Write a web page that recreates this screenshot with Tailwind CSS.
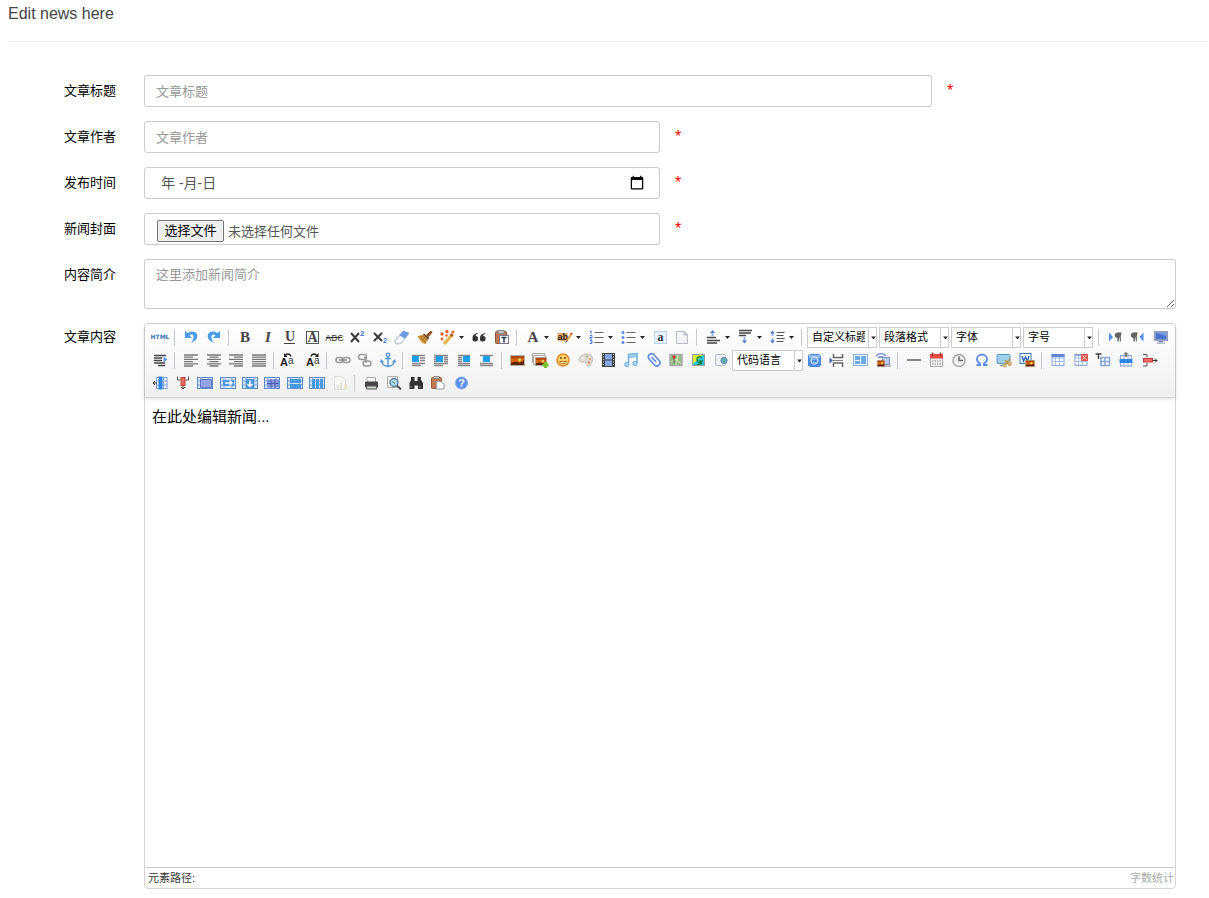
<!DOCTYPE html>
<html lang="zh-CN">
<head>
    <meta charset="UTF-8">
    <meta name="viewport" content="width=device-width, initial-scale=1.0">
    <title>Edit news</title>
    <script src="https://cdn.jsdelivr.net/npm/@tailwindcss/browser@4"></script>
</head>
<body class="bg-white font-['Liberation_Sans','Noto_Sans_CJK_SC',sans-serif] text-[13px] text-black">

    <!-- shared icon parts -->
    <svg class="hidden">
        <symbol id="caret" viewBox="0 0 5 20"><path d="M0 9h5L2.500 12z" fill="#222"/></symbol>
        <symbol id="grid" viewBox="0 0 20 20">
            <rect x="4" y="4.500" width="12" height="11" fill="#f4f8ff" stroke="#8ba6d8"/>
            <path d="M4 8h12M4 11.500h12M7.500 5v10M11.500 5v10" stroke="#a9bee6"/>
        </symbol>
        <symbol id="film" viewBox="0 0 20 20">
            <rect x="2.500" y="4.500" width="15" height="11" fill="#d5e6f8" stroke="#5f8cc8"/>
            <path d="M3 8h14M3 12h14M6 4v12M14 4v12" stroke="#7fa4d6"/>
        </symbol>
        <symbol id="photo" viewBox="0 0 14 10" preserveAspectRatio="none">
            <rect x=".5" y=".5" width="13" height="9" fill="#d8640f" stroke="#b5b0aa"/>
            <path d="M1 1h12v2H1z" fill="#a8480c"/><path d="M1 7l5-1 3 1 4-2v4H1z" fill="#5a2408"/><circle cx="9" cy="4.500" r="1.500" fill="#ffd05a"/>
        </symbol>
    </svg>

    <div class="pl-2 pr-px">
        <h1 class="border-b border-[#eee] pb-[13px] text-base leading-7 text-[#444]">Edit news here</h1>
    </div>

    <form class="flex flex-col gap-[14px] pt-[33px] pr-[33px] pb-[9px] pl-2">
        <div class="flex gap-7">
            <label for="title" class="w-[108px] shrink-0 text-right leading-8">文章标题</label>
            <div class="grid flex-1 grid-cols-[788fr_244fr]">
                <input type="text" id="title" placeholder="文章标题" class="h-8 w-full rounded-[3px] border border-[#ccc] px-[11px] text-[#555] placeholder:text-[#999] focus:border-sky-400 focus:outline-none">
                <span class="pl-[15px] text-base leading-8 text-[#f00]">*</span>
            </div>
        </div>

        <div class="flex gap-7">
            <label for="author" class="w-[108px] shrink-0 text-right leading-8">文章作者</label>
            <div class="grid flex-1 grid-cols-2">
                <input type="text" id="author" placeholder="文章作者" class="h-8 w-full rounded-[3px] border border-[#ccc] px-[11px] text-[#555] placeholder:text-[#999] focus:border-sky-400 focus:outline-none">
                <span class="pl-[15px] text-base leading-8 text-[#f00]">*</span>
            </div>
        </div>

        <div class="flex gap-7">
            <label for="date" class="w-[108px] shrink-0 text-right leading-8">发布时间</label>
            <div class="grid flex-1 grid-cols-2">
                <div class="relative">
                    <input type="date" id="date" class="h-8 w-full rounded-[3px] border border-[#ccc] px-3 text-base text-[#555] focus:border-sky-400 focus:outline-none [&::-webkit-datetime-edit]:opacity-0">
                    <span id="date-hint" class="pointer-events-none absolute inset-y-0 left-[17px] text-sm leading-8 text-[#555]">年 -月-日</span>
                </div>
                <span class="pl-[15px] text-base leading-8 text-[#f00]">*</span>
            </div>
        </div>

        <div class="flex gap-7">
            <label for="cover" class="w-[108px] shrink-0 text-right leading-8">新闻封面</label>
            <div class="grid flex-1 grid-cols-2">
                <div class="relative flex h-8 items-start gap-1 rounded-[3px] border border-[#ccc] px-3 pt-[6px] text-[#555]">
                    <span class="h-[22px] w-[67px] rounded-[2px] border border-[#767676] bg-[#efefef] text-center leading-5 text-black">选择文件</span>
                    <span id="cover-name" class="leading-6">未选择任何文件</span>
                    <input type="file" id="cover" class="absolute inset-0 size-full opacity-0">
                </div>
                <span class="pl-[15px] text-base leading-8 text-[#f00]">*</span>
            </div>
        </div>

        <div class="flex gap-7">
            <label for="intro" class="w-[108px] shrink-0 text-right leading-8">内容简介</label>
            <textarea id="intro" placeholder="这里添加新闻简介" class="block h-[50px] flex-1 rounded-[3px] border border-[#ccc] px-[11px] py-[5px] leading-5 text-[#555] placeholder:text-[#999] focus:border-sky-400 focus:outline-none"></textarea>
        </div>

        <div class="flex gap-7">
            <label for="editor" class="w-[108px] shrink-0 text-right leading-7">文章内容</label>
            <div class="flex-1 rounded-[4px] border border-[#d4d4d4]">

                <!-- toolbar -->
                <div class="flex flex-col gap-[2px] rounded-t-[4px] border-b border-[#d4d4d4] bg-linear-to-b from-white to-[#f0f0f0] py-[3px] pl-1 shadow-[0_1px_4px_rgba(0,0,0,0.15)] [&_button]:flex [&_button]:h-[21px] [&_button]:flex-1 [&_button]:items-start [&_button]:justify-center [&_hr]:mr-[5px] [&_hr]:ml-[3px] [&_hr]:h-[17px] [&_hr]:w-px [&_hr]:border-0 [&_hr]:bg-[#c8c9ce]">

                    <div class="flex min-h-[21px] flex-wrap items-center">
                        <div class="flex w-[22px]">
                            <button type="button" title="源代码"><svg class="size-5 shrink-0 overflow-visible" viewBox="0 0 20 20"><text x="10" y="12" text-anchor="middle" font-size="6" font-weight="bold" font-family="DejaVu Sans" fill="#3c78b4">HTML</text></svg></button>
                        </div>
                        <hr>
                        <div class="flex w-[45px]">
                            <button type="button" title="撤销"><svg class="size-5 shrink-0" viewBox="0 0 20 20"><path d="M4 4v7h7L8.500 8.500C11 6.500 13 8 12.500 11c-.3 1.600-1 3-2.500 4.500C14 14.500 16.500 12 16.300 8.500 15.900 4.500 10.500 3 6.500 6z" fill="#4a9be8"/></svg></button>
                            <button type="button" title="重做"><svg class="size-5 shrink-0" viewBox="0 0 20 20"><path d="M16 4v7H9l2.500-2.500C9 6.500 7 8 7.500 11c.3 1.600 1 3 2.500 4.500C6 14.500 3.500 12 3.700 8.500 4.100 4.500 9.500 3 13.500 6z" fill="#4a9be8"/></svg></button>
                        </div>
                        <hr>
                        <div class="flex w-[202px]">
                            <button type="button" title="加粗"><svg class="size-5 shrink-0" viewBox="0 0 20 20"><text x="10" y="15" text-anchor="middle" font-size="15" font-weight="bold" font-family="Liberation Serif" fill="#444">B</text></svg></button>
                            <button type="button" title="斜体"><svg class="size-5 shrink-0" viewBox="0 0 20 20"><text x="10" y="15" text-anchor="middle" font-size="15" font-weight="bold" font-style="italic" font-family="Liberation Serif" fill="#444">I</text></svg></button>
                            <button type="button" title="下划线"><svg class="size-5 shrink-0" viewBox="0 0 20 20"><text x="10" y="14" text-anchor="middle" font-size="14" font-weight="bold" font-family="Liberation Serif" fill="#444">U</text><path d="M4 16.500h11" stroke="#444"/></svg></button>
                            <button type="button" title="字符边框"><svg class="size-5 shrink-0" viewBox="0 0 20 20"><rect x="3.500" y="4.500" width="12" height="12" fill="none" stroke="#555"/><text x="9.500" y="15" text-anchor="middle" font-size="14" font-weight="bold" font-family="Liberation Serif" fill="#444">A</text></svg></button>
                            <button type="button" title="删除线"><svg class="size-5 shrink-0 overflow-visible" viewBox="0 0 20 20"><text x="9.500" y="14" text-anchor="middle" font-size="9" font-family="Liberation Sans" fill="#333">ABC</text><path d="M1 10.500h16" stroke="#333"/></svg></button>
                            <button type="button" title="上标"><svg class="size-5 shrink-0" viewBox="0 0 20 20"><path d="M4 6l8 9M12 6l-8 9" stroke="#3a3a3a" stroke-width="2"/><text x="13" y="9" font-size="8" font-weight="bold" font-family="Liberation Sans" fill="#3f6fd8">2</text></svg></button>
                            <button type="button" title="下标"><svg class="size-5 shrink-0" viewBox="0 0 20 20"><path d="M4 6l8 8M12 6l-8 8" stroke="#3a3a3a" stroke-width="2"/><text x="13" y="16" font-size="7" font-weight="bold" font-family="Liberation Sans" fill="#3f6fd8">2</text></svg></button>
                            <button type="button" title="清除格式"><svg class="size-5 shrink-0" viewBox="0 0 20 20"><path d="M3 14L11 4l6 2-8 10.500-5 .5z" fill="#f5f8fd" stroke="#a3b6d6"/><path d="M7.500 8.500L11 4l6 2-4 5.500z" fill="#6d9ce6"/></svg></button>
                            <button type="button" title="格式刷"><svg class="size-5 shrink-0" viewBox="0 0 20 20"><path d="M11 8l5-4.500 1.500 2-4.500 5z" fill="#8b5320"/><path d="M2.500 9l7-1.500 4 4-3 5.500c-3-.5-6-3.500-8-8z" fill="#cf933f"/><path d="M9 6.500l5.500 4.500-1.500 1.500-5-5z" fill="#6d4a2c"/><path d="M5.500 9.500l5 6M8 9l4 4.500" stroke="#9d6a2a"/></svg></button>
                        </div>
                        <div class="flex w-8">
                            <button type="button" title="自动排版" class="pl-px"><svg class="size-5 shrink-0" viewBox="0 0 20 20"><path d="M7 17l8-9" stroke="#eeb14a" stroke-width="3"/><path d="M14 9l1.500-2" stroke="#a35a1a" stroke-width="3"/><g fill="#f0602a"><circle cx="5" cy="7" r="1.700"/><circle cx="10" cy="4.500" r="1.700"/><circle cx="5" cy="12" r="1.400"/><circle cx="16" cy="5" r="1.400"/><circle cx="9.500" cy="8.500" r="1.200"/></g></svg><svg class="mr-auto ml-[2px] h-5 w-[5px] shrink-0"><use href="#caret"/></svg></button>
                        </div>
                        <div class="flex w-[45px]">
                            <button type="button" title="引用"><svg class="size-5 shrink-0" viewBox="0 0 20 20"><path d="M9 6C5 6.500 3.500 8.500 3.500 11.500a2.800 2.800 0 1 0 3-2.500C6.700 8 7.500 7 9 6.500zM16.500 6c-4 .5-5.500 2.500-5.500 5.500A2.800 2.800 0 1 0 14 9c.2-1 1-2 2.500-2.500z" fill="#333"/></svg></button>
                            <button type="button" title="纯文本粘贴模式"><svg class="size-5 shrink-0" viewBox="0 0 20 20"><rect x="3.500" y="4.500" width="11" height="12" rx="1" fill="#bd7c55" stroke="#8f5431"/><rect x="6" y="3.500" width="6" height="3" fill="#c4c8ce" stroke="#888"/><rect x="7.500" y="8.500" width="9" height="8" fill="#fff" stroke="#778"/><path d="M9.500 10.500h5M12 10.500v5" stroke="#234" stroke-width="1.500"/></svg></button>
                        </div>
                        <hr>
                        <div class="flex w-32">
                            <button type="button" title="字体颜色" class="pl-px"><svg class="size-5 shrink-0" viewBox="0 0 20 20"><text x="10" y="14.500" text-anchor="middle" font-size="15" font-weight="bold" font-family="Liberation Serif" fill="#444">A</text></svg><svg class="mr-auto ml-px h-5 w-[5px] shrink-0"><use href="#caret"/></svg></button>
                            <button type="button" title="背景色" class="pl-px"><svg class="size-5 shrink-0" viewBox="0 0 20 20"><rect x="2.500" y="6" width="10" height="8" fill="#e8a868"/><text x="2.500" y="13" font-size="9" font-weight="bold" font-family="Liberation Sans" fill="#222">ab</text><path d="M11.500 14L16.500 7" stroke="#e0a04a" stroke-width="2"/><path d="M16 7.500l1-1.500" stroke="#d8442e" stroke-width="2"/><path d="M10.500 15.500l1.500-2" stroke="#333"/></svg><svg class="mr-auto ml-px h-5 w-[5px] shrink-0"><use href="#caret"/></svg></button>
                            <button type="button" title="有序列表" class="pl-px"><svg class="size-5 shrink-0" viewBox="0 0 20 20"><path d="M4 3.500v3.500M3 4.500h1M3 8.500h2v2H3v1.500h2M3 13.500h2v3H3M3.500 15H5" fill="none" stroke="#4f7fe0"/><path d="M7.500 5.500h9M7.500 10.500h9M7.500 15.500h9" stroke="#666"/></svg><svg class="mr-auto ml-px h-5 w-[5px] shrink-0"><use href="#caret"/></svg></button>
                            <button type="button" title="无序列表" class="pl-px"><svg class="size-5 shrink-0" viewBox="0 0 20 20"><g fill="#5c86e6"><circle cx="4" cy="5.500" r="1.500"/><circle cx="4" cy="10.500" r="1.500"/><circle cx="4" cy="15.500" r="1.500"/></g><path d="M7.500 5.500h9M7.500 10.500h9M7.500 15.500h9" stroke="#666"/></svg><svg class="mr-auto ml-px h-5 w-[5px] shrink-0"><use href="#caret"/></svg></button>
                        </div>
                        <div class="flex w-[43px]">
                            <button type="button" title="全选"><svg class="size-5 shrink-0" viewBox="0 0 20 20"><rect x="3.500" y="4.500" width="12" height="12" fill="#e8f1fd" stroke="#7fb0ee" stroke-dasharray="1 1"/><text x="9.500" y="13.500" text-anchor="middle" font-size="12" font-weight="bold" font-family="Liberation Serif" fill="#333">a</text></svg></button>
                            <button type="button" title="清空文档"><svg class="size-5 shrink-0" viewBox="0 0 20 20"><path d="M4.500 4.500h8l3 3v9h-11z" fill="#f3f5f9" stroke="#b4b9c4"/><path d="M12 4.500V8h3.500z" fill="#d5dae4" stroke="#b4b9c4"/></svg></button>
                        </div>
                        <hr>
                        <div class="flex w-24">
                            <button type="button" title="段前距" class="pl-[2px]"><svg class="size-5 shrink-0" viewBox="0 0 20 20"><path d="M3 10.500h9M3 13.500h13M3 16h10" stroke="#444" stroke-width="1.500"/><path d="M8.500 9V5" stroke="#9ab2e6" stroke-width="2"/><path d="M6 6l2.500-3L11 6z" fill="#5678c8"/></svg><svg class="mr-auto ml-px h-5 w-[5px] shrink-0"><use href="#caret"/></svg></button>
                            <button type="button" title="段后距" class="pl-[2px]"><svg class="size-5 shrink-0" viewBox="0 0 20 20"><path d="M3 3.500h13M3 6h12M3 8.500h7" stroke="#444" stroke-width="1.500"/><path d="M8.500 10v4" stroke="#9ab2e6" stroke-width="2"/><path d="M6 13.500l2.500 3 2.500-3z" fill="#5678c8"/></svg><svg class="mr-auto ml-px h-5 w-[5px] shrink-0"><use href="#caret"/></svg></button>
                            <button type="button" title="行间距" class="pl-[2px]"><svg class="size-5 shrink-0" viewBox="0 0 20 20"><path d="M8.500 5.500h8M8.500 8.500h7M8.500 11.500h8M8.500 14.500h7" stroke="#555"/><path d="M4.500 5v10" stroke="#9ab2e6" stroke-width="2" stroke-dasharray="4 2"/><path d="M2 6.500l2.500-3 2.500 3zM2 13.500l2.500 3 2.500-3z" fill="#5678c8"/></svg><svg class="mr-auto ml-px h-5 w-[5px] shrink-0"><use href="#caret"/></svg></button>
                        </div>
                        <hr>
                        <div class="flex gap-[2px] pr-[2px]">
                            <div class="flex h-[21px] w-[70px] border border-[#ccc] bg-white">
                                <div class="w-[61px] border-r border-[#ccc] pr-[3px]"><select aria-label="自定义标题" class="block w-full appearance-none pl-1 text-[11px] leading-[19px] outline-none"><option>自定义标题</option></select></div>
                                <svg class="ml-[2px] h-[19px] w-[5px]"><use href="#caret"/></svg>
                            </div>
                            <div class="flex h-[21px] w-[70px] border border-[#ccc] bg-white">
                                <div class="w-[61px] border-r border-[#ccc] pr-[3px]"><select aria-label="段落格式" class="block w-full appearance-none pl-1 text-[11px] leading-[19px] outline-none"><option>段落格式</option></select></div>
                                <svg class="ml-[2px] h-[19px] w-[5px]"><use href="#caret"/></svg>
                            </div>
                            <div class="flex h-[21px] w-[70px] border border-[#ccc] bg-white">
                                <div class="w-[61px] border-r border-[#ccc] pr-[3px]"><select aria-label="字体" class="block w-full appearance-none pl-1 text-[11px] leading-[19px] outline-none"><option>字体</option></select></div>
                                <svg class="ml-[2px] h-[19px] w-[5px]"><use href="#caret"/></svg>
                            </div>
                            <div class="flex h-[21px] w-[70px] border border-[#ccc] bg-white">
                                <div class="w-[61px] border-r border-[#ccc] pr-[3px]"><select aria-label="字号" class="block w-full appearance-none pl-1 text-[11px] leading-[19px] outline-none"><option>字号</option></select></div>
                                <svg class="ml-[2px] h-[19px] w-[5px]"><use href="#caret"/></svg>
                            </div>
                        </div>
                        <hr>
                        <div class="flex w-[67px]">
                            <button type="button" title="从左向右输入"><svg class="size-5 shrink-0" viewBox="0 0 20 20"><path d="M4 5.500l4 4.500-4 4.500z" fill="#4f8df0"/><path d="M16.500 6H12.500a2.200 2.200 0 0 0 0 4.400h.5V14.500M15.300 6V14.500" fill="#666" stroke="#555"/></svg></button>
                            <button type="button" title="从右向左输入"><svg class="size-5 shrink-0" viewBox="0 0 20 20"><path d="M16.500 5.500l-4 4.500 4 4.500z" fill="#4f8df0"/><path d="M10.500 6H6.500a2.200 2.200 0 0 0 0 4.400h.5V14.500M9.300 6V14.500" fill="#666" stroke="#555"/></svg></button>
                            <button type="button" title="全屏"><svg class="size-5 shrink-0" viewBox="0 0 20 20"><rect x="5" y="5" width="12" height="8" fill="#4a70d0" stroke="#8d9dc4" stroke-width="2"/><path d="M6 6h10v3z" fill="#7598e8"/><path d="M9 14.500h4M7 16h8" stroke="#7788aa"/></svg></button>
                        </div>
                    </div>

                    <div class="flex min-h-[21px] flex-wrap items-center">
                        <div class="flex w-[22px]">
                            <button type="button" title="首行缩进"><svg class="size-5 shrink-0" viewBox="0 0 20 20"><path d="M4 5.500h12M4 8h8M4 10.500h8M4 13h11M8 15.500h7" stroke="#444" stroke-width="1.500"/><path d="M13.500 6.500l4 3-4 3z" fill="#5b95f2"/></svg></button>
                        </div>
                        <hr>
                        <div class="flex w-[90px]">
                            <button type="button" title="居左对齐"><svg class="size-5 shrink-0" viewBox="0 0 20 20"><path d="M3 5h14M3 7.200h9M3 9.400h14M3 11.600h9M3 13.800h14M3 16h9" stroke="#777" stroke-width="1.300"/></svg></button>
                            <button type="button" title="居中对齐"><svg class="size-5 shrink-0" viewBox="0 0 20 20"><path d="M3 5h14M5.500 7.200h9M3 9.400h14M5.500 11.600h9M3 13.800h14M5.500 16h9" stroke="#777" stroke-width="1.300"/></svg></button>
                            <button type="button" title="居右对齐"><svg class="size-5 shrink-0" viewBox="0 0 20 20"><path d="M3 5h14M8 7.200h9M3 9.400h14M8 11.600h9M3 13.800h14M8 16h9" stroke="#777" stroke-width="1.300"/></svg></button>
                            <button type="button" title="两端对齐"><svg class="size-5 shrink-0" viewBox="0 0 20 20"><path d="M3 5h14M3 7.200h14M3 9.400h14M3 11.600h14M3 13.800h14M3 16h14" stroke="#777" stroke-width="1.300"/></svg></button>
                        </div>
                        <hr>
                        <div class="flex w-11">
                            <button type="button" title="字母大写"><svg class="size-5 shrink-0 overflow-visible" viewBox="0 0 20 20"><text x="0" y="16" font-size="11" font-weight="bold" font-family="Liberation Sans" fill="#222">A</text><text x="8" y="14" font-size="10" font-family="Liberation Sans" fill="#333">a</text><path d="M5 6c1-2.500 5-3 6 .5" fill="none" stroke="#222" stroke-width="1.300"/><path d="M4 3v4h3.500z" fill="#222"/></svg></button>
                            <button type="button" title="字母小写"><svg class="size-5 shrink-0 overflow-visible" viewBox="0 0 20 20"><text x="4" y="16" font-size="11" font-weight="bold" font-family="Liberation Sans" fill="#222">A</text><text x="12" y="14" font-size="10" font-family="Liberation Sans" fill="#333">a</text><path d="M9 6.500c1-3.500 5-3 6-.5" fill="none" stroke="#222" stroke-width="1.300"/><path d="M16.500 3v4H13z" fill="#222"/></svg></button>
                        </div>
                        <hr>
                        <div class="flex w-[67px]">
                            <button type="button" title="超链接"><svg class="size-5 shrink-0" viewBox="0 0 20 20"><g fill="none" stroke="#999" stroke-width="1.500"><rect x="3" y="7.500" width="7" height="5" rx="2.500"/><rect x="10" y="7.500" width="7" height="5" rx="2.500"/></g><path d="M6 10h8" stroke="#888" stroke-width="1.500"/></svg></button>
                            <button type="button" title="取消链接"><svg class="size-5 shrink-0" viewBox="0 0 20 20"><g fill="none" stroke="#999" stroke-width="1.500"><rect x="3.500" y="4.500" width="8" height="5" rx="2.500"/><rect x="8" y="11" width="8" height="5" rx="2.500"/><path d="M9 7c3 1 2 3 2 6"/></g></svg></button>
                            <button type="button" title="锚点"><svg class="size-5 shrink-0" viewBox="0 0 20 20"><g fill="none" stroke="#5a9ad6" stroke-width="1.500"><circle cx="10" cy="5" r="1.700"/><path d="M10 7v9.500M7 8.500h6M3.500 11c.5 3 3 5 6.500 5.500 3.500-.5 6-2.500 6.500-5.500M2.500 12.500l1-2 2 1.500M17.500 12.500l-1-2-2 1.500"/></g></svg></button>
                        </div>
                        <hr>
                        <div class="flex w-[90px]">
                            <button type="button" title="左浮动"><svg class="size-5 shrink-0" viewBox="0 0 20 20"><path d="M3 5.500h13M11 8h5M11 10.500h5M3 13.500h13M3 15.500h9" stroke="#888" stroke-width="1.300"/><path d="M3 6h7v6H3z" fill="#1aa0ea"/></svg></button>
                            <button type="button" title="默认"><svg class="size-5 shrink-0" viewBox="0 0 20 20"><path d="M2 5.500h14M12 7.500h4M12 9.500h4M2 13.500h14M2 15.500h9M12 11.500h4M2 7.500h2M2 9.500h2M2 11.500h2" stroke="#888" stroke-width="1.300"/><path d="M4 6h7v6H4z" fill="#1aa0ea"/></svg></button>
                            <button type="button" title="右浮动"><svg class="size-5 shrink-0" viewBox="0 0 20 20"><path d="M4 5.500h12M4 7.500h4M4 9.500h4M4 11.500h4M4 13.500h12M4 15.500h12" stroke="#888" stroke-width="1.300"/><path d="M9 6h7v6H9z" fill="#1aa0ea"/></svg></button>
                            <button type="button" title="居中"><svg class="size-5 shrink-0" viewBox="0 0 20 20"><path d="M3 5.500h13M3 13.500h13M3 15.500h13" stroke="#888" stroke-width="1.300"/><path d="M6 6h7v6H6z" fill="#1aa0ea"/></svg></button>
                        </div>
                        <hr>
                        <div class="flex w-[225px]">
                            <button type="button" title="单图上传"><svg class="size-5 shrink-0" viewBox="0 0 20 20"><use href="#photo" x="2" y="5" width="15" height="11"/></svg></button>
                            <button type="button" title="多图上传"><svg class="size-5 shrink-0" viewBox="0 0 20 20"><path d="M1.500 3.500h12v9h-12z" fill="#eee" stroke="#aaa"/><path d="M2.500 5.500h12v9h-12z" fill="#eee" stroke="#aaa"/><use href="#photo" x="4" y="7" width="12" height="9"/><path d="M14.500 12v6M11.500 15h6" stroke="#79c42a" stroke-width="3"/></svg></button>
                            <button type="button" title="表情"><svg class="size-5 shrink-0" viewBox="0 0 20 20"><circle cx="10" cy="10" r="6" fill="#fbd26a" stroke="#e08a2c" stroke-width="1.500"/><path d="M8 7v2M12 7v2" stroke="#7a4510" stroke-width="1.500"/><path d="M6.500 11.500h7c-.5 3-6.500 3-7 0z" fill="#fff" stroke="#b5651a"/></svg></button>
                            <button type="button" title="涂鸦"><svg class="size-5 shrink-0" viewBox="0 0 20 20"><path d="M3 8.500c1-4 9-6 12-3.500 3 3 1 9-2 11.500-1.500.5-2.500-1-2-2.500.5-2-1.500-2-4.500-2S2.700 10.500 3 8.500z" fill="#dedad2" stroke="#c4c0b8"/><circle cx="7" cy="8" r="1" fill="#fff"/><circle cx="11" cy="6.500" r="1" fill="#9ab07a"/><circle cx="14" cy="9" r="1" fill="#e0a040"/><circle cx="13" cy="12.500" r="1" fill="#e26a3a"/></svg></button>
                            <button type="button" title="视频"><svg class="size-5 shrink-0" viewBox="0 0 20 20"><path d="M4 3h13v14H4z" fill="#444"/><path d="M7 4h7v5.500H7zM7 10.500h7V16H7z" fill="#86a4e8"/><path d="M5.500 4v12M15.500 4v12" stroke="#ccc" stroke-dasharray="1 1.500"/></svg></button>
                            <button type="button" title="音乐"><svg class="size-5 shrink-0" viewBox="0 0 20 20"><path d="M7.500 14V4.500l8.500-1V13" fill="none" stroke="#6fb1e2" stroke-width="1.500"/><path d="M7.500 4.500l8.500-1v3l-8.500 1z" fill="#a9d4f4" stroke="#6fb1e2"/><circle cx="5.800" cy="14.500" r="2.200" fill="#a9d4f4" stroke="#6fb1e2"/><circle cx="14" cy="13.500" r="2.200" fill="#a9d4f4" stroke="#6fb1e2"/></svg></button>
                            <button type="button" title="附件"><svg class="size-5 shrink-0 overflow-visible" viewBox="0 0 20 20"><g fill="none" stroke="#5b86e0" stroke-width="1.500" transform="rotate(-42 11 10)"><rect x="8" y="3" width="6.500" height="14" rx="3.200"/><path d="M11.200 6v7"/></g></svg></button>
                            <button type="button" title="百度地图"><svg class="size-5 shrink-0" viewBox="0 0 20 20"><rect x="4" y="4.500" width="12" height="11" fill="#8fbf86" stroke="#aaa" stroke-width="1.500"/><path d="M5 12l5-3 5 5M12 5l-2 10" stroke="#e9e2b8" fill="none"/><path d="M8 6v7" stroke="#555"/><circle cx="8" cy="7" r="1.700" fill="#d93a2e"/></svg></button>
                            <button type="button" title="Google地图"><svg class="size-5 shrink-0" viewBox="0 0 20 20"><path d="M5 5h11v11H5z" fill="#27c3ea"/><path d="M5 5h10L5 14z" fill="#d8ec38"/><path d="M14 7.500c-2-1.500-5-1-5 2s4 4 5 1.500h-2.500M9 15l5-2" stroke="#14863f" fill="none" stroke-width="1.500"/><rect x="4.500" y="4.500" width="12" height="11" fill="none" stroke="#999"/></svg></button>
                            <button type="button" title="插入Iframe"><svg class="size-5 shrink-0" viewBox="0 0 20 20"><rect x="4.500" y="4.500" width="10" height="11" rx="1" fill="#eef1f6" stroke="#b4bac6"/><circle cx="13" cy="10.500" r="3.200" fill="#57a8cf" stroke="#7a93a8"/><path d="M12 9l2.500 1-1.500 2.500z" fill="#6fc06a"/></svg></button>
                        </div>
                        <div class="flex h-[21px] w-[71px] border border-[#ccc] bg-white">
                            <div class="w-[62px] border-r border-[#ccc] pr-[3px]"><select aria-label="代码语言" class="block w-full appearance-none pl-1 text-[11px] leading-[19px] outline-none"><option>代码语言</option></select></div>
                            <svg class="ml-[2px] h-[19px] w-[5px]"><use href="#caret"/></svg>
                        </div>
                        <div class="flex w-[91px]">
                            <button type="button" title="百度应用"><svg class="size-5 shrink-0" viewBox="0 0 20 20"><rect x="4" y="4" width="13" height="13" rx="3" fill="#4a8ade"/><path d="M5 5h11v3H5z" fill="#8fbaf0"/><circle cx="10.500" cy="10.500" r="3.700" fill="#7fb4ee" stroke="#d8eafc"/><path d="M8.500 11h4" stroke="#2b62b4"/></svg></button>
                            <button type="button" title="分页"><svg class="size-5 shrink-0" viewBox="0 0 20 20"><path d="M6.500 4v3.500h9V4M6.500 17v-4h9v4" fill="#fff" stroke="#666" stroke-width="1.500"/><path d="M6 10.500h10" stroke="#888"/><path d="M2.500 7.500l3.500 3-3.500 3z" fill="#4767b8"/></svg></button>
                            <button type="button" title="模板"><svg class="size-5 shrink-0" viewBox="0 0 20 20"><rect x="3.500" y="4.500" width="14" height="11" fill="#eef5fd" stroke="#86b2e2"/><path d="M5 6h5v4H5zM5 11h5v3H5zM11 6h5v8h-5z" fill="#6aa8e6"/></svg></button>
                            <button type="button" title="背景"><svg class="size-5 shrink-0" viewBox="0 0 20 20"><path d="M3 6c3-3 7-3 10 0M5 8c2-1.500 4-1.500 6 0" fill="none" stroke="#6f8fd8" stroke-width="1.500"/><rect x="9.500" y="7.500" width="7" height="7" fill="#b9cdf2" stroke="#7a90c0"/><path d="M10 16h8" stroke="#888"/><use href="#photo" x="4" y="10" width="8" height="7"/></svg></button>
                        </div>
                        <hr>
                        <div class="flex w-[135px]">
                            <button type="button" title="分隔线"><svg class="size-5 shrink-0" viewBox="0 0 20 20"><path d="M3 10h14" stroke="#888" stroke-width="2"/></svg></button>
                            <button type="button" title="日期"><svg class="size-5 shrink-0" viewBox="0 0 20 20"><path d="M3.500 4.500h12v12h-12z" fill="#f2f2f2" stroke="#aaa"/><path d="M3 4h13v4.500H3z" fill="#e04a3e"/><path d="M5.500 2.500V6M13.500 2.500V6" stroke="#a33" stroke-width="1.500"/><path d="M5 11h9M5 14h9" stroke="#bbb" stroke-width="2" stroke-dasharray="1.500 1"/></svg></button>
                            <button type="button" title="时间"><svg class="size-5 shrink-0" viewBox="0 0 20 20"><circle cx="10" cy="10.500" r="6" fill="#f1f1f1" stroke="#a8a8a8" stroke-width="1.500"/><path d="M10 6.500v4h4" fill="none" stroke="#666" stroke-width="1.500"/></svg></button>
                            <button type="button" title="特殊字符"><svg class="size-5 shrink-0" viewBox="0 0 20 20"><path d="M4.500 15H8v-1.500C5.500 12 5 10.500 5 9a5 4.300 0 0 1 10 0c0 1.500-.5 3-3 4.500V15h3.500" fill="none" stroke="#5b8ae8" stroke-width="1.800"/></svg></button>
                            <button type="button" title="截图"><svg class="size-5 shrink-0" viewBox="0 0 20 20"><rect x="3" y="4.500" width="13" height="9" rx="1" fill="#9cd0ee" stroke="#5f96bc"/><path d="M6 15.500h6" stroke="#789"/><path d="M10 15l6-6M11 10l5 6" stroke="#c79a48" stroke-width="1.500"/><circle cx="11" cy="15.500" r="1.500" fill="#ecd08a" stroke="#c79a48"/><circle cx="16" cy="13.500" r="1.500" fill="#ecd08a" stroke="#c79a48"/></svg></button>
                            <button type="button" title="图片转存"><svg class="size-5 shrink-0" viewBox="0 0 20 20"><rect x="3" y="3.500" width="11" height="10" fill="#fff" stroke="#3e7ac0"/><path d="M5 6l1.500 5L8.500 7l2 4L12 6" fill="none" stroke="#2f6cb8" stroke-width="1.500"/><use href="#photo" x="8" y="10" width="10" height="7"/></svg></button>
                        </div>
                        <hr>
                        <div class="flex w-[113px]">
                            <button type="button" title="插入表格"><svg class="size-5 shrink-0" viewBox="0 0 20 20"><use href="#grid"/><path d="M3.500 4h13v3h-13z" fill="#5f86d0"/></svg></button>
                            <button type="button" title="删除表格"><svg class="size-5 shrink-0" viewBox="0 0 20 20"><use href="#grid"/><path d="M3.500 4h8v2h-8z" fill="#8ba6d8"/><path d="M10 4h7v7h-7z" fill="#e2544c"/><path d="M11.500 5.500l4 4M15.500 5.500l-4 4" stroke="#fff"/></svg></button>
                            <button type="button" title="表格前插入行"><svg class="size-5 shrink-0" viewBox="0 0 20 20"><path d="M2.500 4h6M5.500 4v5" stroke="#444" stroke-width="1.500"/><path d="M7 7.500h10M7 11.500h10M7 15.500h10M8 7v9M12 7v9M16.500 7v9" stroke="#8ba6d8" stroke-width="1.500"/></svg></button>
                            <button type="button" title="前插入行"><svg class="size-5 shrink-0" viewBox="0 0 20 20"><path d="M4 5.500h12M4 16h12M4.500 5v11.500M8 5v11.500M12 5v11.500M15.500 5v11.500" stroke="#8ba6d8"/><path d="M3.500 9h13v4h-13z" fill="#2f86e0"/><path d="M10 7V3M8 4.500l2-2 2 2" fill="none" stroke="#333"/></svg></button>
                            <button type="button" title="删除行"><svg class="size-5 shrink-0" viewBox="0 0 20 20"><path d="M4 4.500h4v3M4 16h4v-3" fill="none" stroke="#555"/><rect x="4.500" y="8.500" width="9" height="3.500" fill="#ec6a64" stroke="#c03c38"/><path d="M14 10.500h4M16 8.500l2 2-2 2" fill="none" stroke="#333"/></svg></button>
                        </div>
                    </div>

                    <div class="flex min-h-[21px] flex-wrap items-center">
                        <div class="flex w-[202px]">
                            <button type="button" title="前插入列"><svg class="size-5 shrink-0" viewBox="0 0 20 20"><path d="M6 4.500h11M6 8h11M6 12h11M6 15.500h11M6.500 4v12M13.500 4v12M17 4v12" stroke="#7fa2de"/><path d="M8.500 3.500h4v13h-4z" fill="#2f86e0"/><path d="M7 10H3M5 8l-2 2 2 2" fill="none" stroke="#333"/></svg></button>
                            <button type="button" title="删除列"><svg class="size-5 shrink-0" viewBox="0 0 20 20"><path d="M4.500 3.500v3.500h3M15.500 3.500v3.500h-3M10 13v3" fill="none" stroke="#555"/><rect x="8" y="4.500" width="4" height="8" fill="#ec6a64" stroke="#c03c38"/><path d="M8 14l2 2 2-2" fill="none" stroke="#333"/></svg></button>
                            <button type="button" title="合并多个单元格"><svg class="size-5 shrink-0" viewBox="0 0 20 20"><use href="#film"/><path d="M5.500 6.500h11v8h-11z" fill="#93a6e4" stroke="#6478c8"/></svg></button>
                            <button type="button" title="右合并单元格"><svg class="size-5 shrink-0" viewBox="0 0 20 20"><use href="#film"/><path d="M5 7h11v6H5z" fill="#4a96e0"/><path d="M7 10h6.500M11.500 7.500L14 10l-2.500 2.500" fill="none" stroke="#fff" stroke-width="1.500"/></svg></button>
                            <button type="button" title="下合并单元格"><svg class="size-5 shrink-0" viewBox="0 0 20 20"><use href="#film"/><path d="M6 6h8v9.500H6z" fill="#4a96e0"/><path d="M10 7.500v5.500M7.500 11L10 13.500l2.500-2.500" fill="none" stroke="#fff" stroke-width="1.500"/></svg></button>
                            <button type="button" title="完全拆分单元格"><svg class="size-5 shrink-0" viewBox="0 0 20 20"><use href="#film"/><path d="M5 6.500h12v8H5z" fill="#8096de"/><path d="M5 10.500h12M9 6v9M13 6v9" stroke="#4a5cab"/></svg></button>
                            <button type="button" title="拆分成行"><svg class="size-5 shrink-0" viewBox="0 0 20 20"><use href="#film"/><path d="M5 6h11v4H5zM5 11h11v4H5z" fill="#4a9ae0"/></svg></button>
                            <button type="button" title="拆分成列"><svg class="size-5 shrink-0" viewBox="0 0 20 20"><use href="#film"/><path d="M5 6h3v9H5zM9 6h3v9H9zM13 6h3v9h-3z" fill="#4a9ae0"/></svg></button>
                            <button type="button" title="图表" disabled><svg class="size-5 shrink-0 opacity-30" viewBox="0 0 20 20"><path d="M4.500 3.500h8l3 3v10h-11z" fill="#fff" stroke="#bbb"/><path d="M8 16v-4M11 16V9.500" stroke="#b5cc8a" stroke-width="2"/><path d="M14 11h3v5h-3z" fill="#e2c480"/></svg></button>
                        </div>
                        <hr>
                        <div class="flex w-28">
                            <button type="button" title="打印"><svg class="size-5 shrink-0" viewBox="0 0 20 20"><path d="M6 4.500h8.500v5H6z" fill="#f5f5f5" stroke="#aaa"/><rect x="4" y="8.500" width="13" height="6" rx="1" fill="#444"/><path d="M5.500 13h10v3h-10z" fill="#cfd8cf" stroke="#555"/></svg></button>
                            <button type="button" title="预览"><svg class="size-5 shrink-0" viewBox="0 0 20 20"><path d="M3.500 3.500h10v11h-10z" fill="#fff" stroke="#aaa"/><circle cx="10" cy="9.500" r="4" fill="#aed4ee" stroke="#5c7f9c" stroke-width="1.500"/><path d="M13 12.500l4 4" stroke="#555" stroke-width="2"/><path d="M8 8.500l3 2" stroke="#5d9a5a"/></svg></button>
                            <button type="button" title="查询替换"><svg class="size-5 shrink-0" viewBox="0 0 20 20"><path d="M5 4h3.500v4h3V4H15v3l2 3v6h-5v-3.500H8.500V16h-5v-6l1.500-3z" fill="#333"/><path d="M5 13v2M14 13v2" stroke="#888"/></svg></button>
                            <button type="button" title="从草稿箱加载"><svg class="size-5 shrink-0" viewBox="0 0 20 20"><rect x="3.500" y="4.500" width="10" height="11" rx="1" fill="#c07a50" stroke="#955732"/><rect x="6" y="3.500" width="5" height="2" fill="#ccc" stroke="#888"/><path d="M8.500 8.500H13l3 2.500v5H8.500z" fill="#fff" stroke="#99a"/></svg></button>
                            <button type="button" title="帮助"><svg class="size-5 shrink-0" viewBox="0 0 20 20"><circle cx="10.500" cy="10" r="6" fill="#5a8cf0" stroke="#86acf4"/><text x="10.500" y="14" text-anchor="middle" font-size="11" font-weight="bold" font-family="Liberation Sans" fill="#fff">?</text></svg></button>
                        </div>
                    </div>
                </div>

                <div id="editor" contenteditable="true" class="min-h-[469px] px-[7px] py-[9px] text-[15px] leading-5 outline-none">在此处编辑新闻...</div>

                <div class="flex h-[21px] items-center justify-between border-t border-[#ccc] pr-px pl-[3px] text-[11px]">
                    <span class="text-[#333]">元素路径:</span>
                    <span class="text-[#aaa]">字数统计</span>
                </div>
            </div>
        </div>
    </form>

    <script>
        document.getElementById("date").addEventListener("change", (event) => {
            const filled = event.target.value !== "";
            document.getElementById("date-hint").textContent = filled ? event.target.value : "年 -月-日";
        });

        document.getElementById("cover").addEventListener("change", (event) => {
            const file = event.target.files[0];
            document.getElementById("cover-name").textContent = file ? file.name : "未选择任何文件";
        });
    </script>
</body>
</html>
